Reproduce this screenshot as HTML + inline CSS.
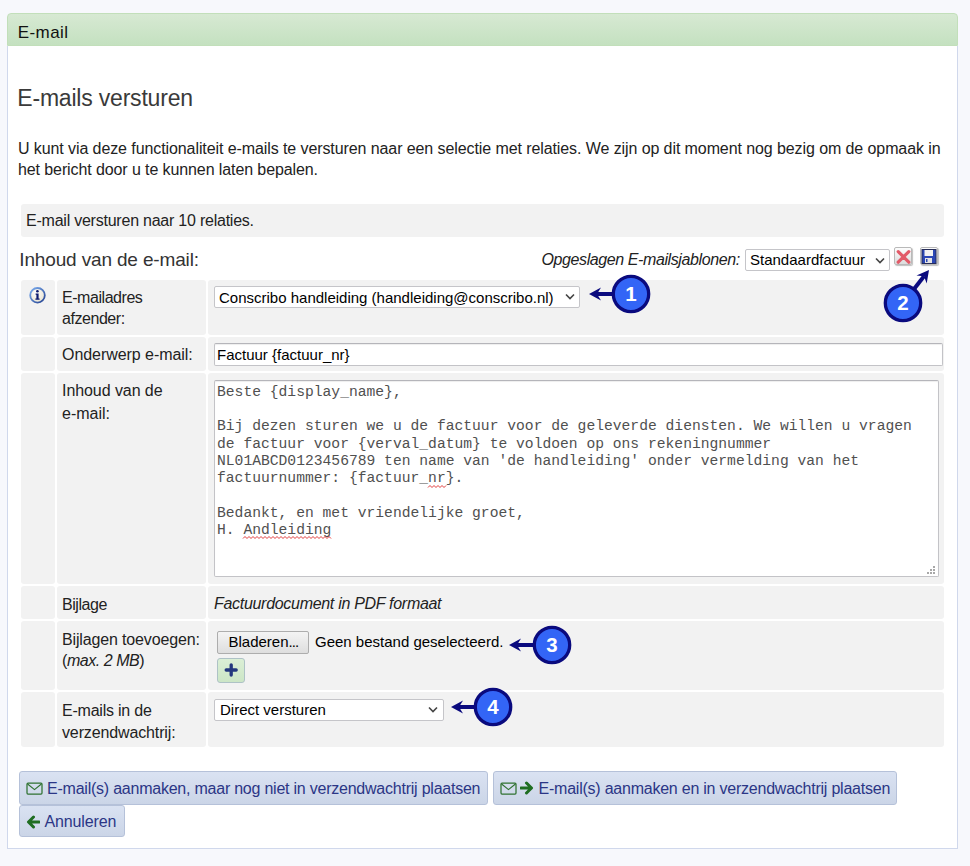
<!DOCTYPE html>
<html><head><meta charset="utf-8"><title>E-mail</title>
<style>html,body{margin:0;padding:0;}body{width:970px;height:866px;overflow:hidden;position:relative;background:#f7f8fc;font-family:'Liberation Sans', sans-serif;}</style>
</head><body>
<div style="position:absolute;left:7px;top:13px;width:951px;height:33px;box-sizing:border-box;background:linear-gradient(#d7e9d3,#c4e1c0);border:1px solid #c2dfba;border-radius:4px 4px 0 0;"></div>
<div style="position:absolute;left:7px;top:46px;width:951px;height:803px;box-sizing:border-box;background:#fff;border:1px solid #d0d8ec;border-top:0;"></div>
<div style="position:absolute;left:17.80px;top:21.51px;line-height:22px;font-size:17px;font-family:'Liberation Sans', sans-serif;color:#111;letter-spacing:0.4px;white-space:pre;">E-mail</div>
<div style="position:absolute;left:17.30px;top:83.43px;line-height:30px;font-size:23px;font-family:'Liberation Sans', sans-serif;color:#3a3a3a;letter-spacing:-0.2px;white-space:pre;">E-mails versturen</div>
<div style="position:absolute;left:18.00px;top:137.75px;line-height:21px;font-size:16px;font-family:'Liberation Sans', sans-serif;color:#222;letter-spacing:-0.09px;white-space:pre;">U kunt via deze functionaliteit e-mails te versturen naar een selectie met relaties. We zijn op dit moment nog bezig om de opmaak in</div>
<div style="position:absolute;left:18.00px;top:159.25px;line-height:21px;font-size:16px;font-family:'Liberation Sans', sans-serif;color:#222;letter-spacing:-0.1px;white-space:pre;">het bericht door u te kunnen laten bepalen.</div>
<div style="position:absolute;left:21px;top:204px;width:923px;height:33px;box-sizing:border-box;background:#f2f2f2;border-radius:3px;"></div>
<div style="position:absolute;left:26.00px;top:210.35px;line-height:21px;font-size:16px;font-family:'Liberation Sans', sans-serif;color:#222;letter-spacing:-0.23px;white-space:pre;">E-mail versturen naar 10 relaties.</div>
<div style="position:absolute;left:19.30px;top:246.71px;line-height:25px;font-size:19px;font-family:'Liberation Sans', sans-serif;color:#333;letter-spacing:-0.15px;white-space:pre;">Inhoud van de e-mail:</div>
<div style="position:absolute;left:541.50px;top:249.15px;line-height:21px;font-size:16px;font-family:'Liberation Sans', sans-serif;color:#222;letter-spacing:-0.4px;white-space:pre;font-style:italic;">Opgeslagen E-mailsjablonen:</div>
<div style="position:absolute;left:745px;top:249px;width:145px;height:22px;box-sizing:border-box;background:#fff;border:1px solid #c5c5c9;border-radius:2px;"></div>
<div style="position:absolute;left:750.00px;top:250.40px;line-height:20px;font-size:15px;font-family:'Liberation Sans', sans-serif;color:#000;letter-spacing:0px;white-space:pre;">Standaardfactuur</div>
<svg style="position:absolute;left:875px;top:257px" width="10" height="8" viewBox="0 0 10 8"><path d="M1 1.5 L5 5.5 L9 1.5" fill="none" stroke="#444" stroke-width="1.6"/></svg>
<div style="position:absolute;left:894px;top:247px;width:18px;height:18px;box-sizing:border-box;border:1px solid #b9b9b9;border-radius:2px;background:linear-gradient(#fdfdfd,#dcdcdc);box-shadow:1px 1px 1px rgba(0,0,0,0.25);"><svg width="16" height="16" viewBox="0 0 16 16" style="position:absolute;left:0;top:0"><path d="M3.2 3.6 L13.8 14.2 M13.8 3.6 L3.2 14.2" stroke="#e25a68" stroke-width="3.2" stroke-linecap="round"/></svg></div>
<div style="position:absolute;left:920px;top:247px;width:18px;height:18px;box-sizing:border-box;border:1px solid #b9b9b9;border-radius:2px;background:linear-gradient(#fdfdfd,#dcdcdc);box-shadow:1px 1px 1px rgba(0,0,0,0.25);"><svg width="16" height="16" viewBox="0 0 16 16" style="position:absolute;left:0;top:0"><rect x="1" y="1.5" width="14" height="14" fill="#2b47b5" stroke="#262c58" stroke-width="1"/><rect x="3.5" y="2" width="8.5" height="6" fill="#f2f2f2"/><rect x="4" y="10" width="7" height="5" fill="#e4e4e4"/><rect x="5" y="11" width="1.5" height="3" fill="#2b47b5"/></svg></div>
<div style="position:absolute;left:21px;top:280px;width:34px;height:55px;box-sizing:border-box;background:#f2f2f2;border-radius:3px;"></div>
<div style="position:absolute;left:57px;top:280px;width:149px;height:55px;box-sizing:border-box;background:#f2f2f2;border-radius:3px;"></div>
<div style="position:absolute;left:208px;top:280px;width:736px;height:55px;box-sizing:border-box;background:#f2f2f2;border-radius:3px;"></div>
<div style="position:absolute;left:21px;top:337px;width:34px;height:34px;box-sizing:border-box;background:#f2f2f2;border-radius:3px;"></div>
<div style="position:absolute;left:57px;top:337px;width:149px;height:34px;box-sizing:border-box;background:#f2f2f2;border-radius:3px;"></div>
<div style="position:absolute;left:208px;top:337px;width:736px;height:34px;box-sizing:border-box;background:#f2f2f2;border-radius:3px;"></div>
<div style="position:absolute;left:21px;top:373px;width:34px;height:211px;box-sizing:border-box;background:#f2f2f2;border-radius:3px;"></div>
<div style="position:absolute;left:57px;top:373px;width:149px;height:211px;box-sizing:border-box;background:#f2f2f2;border-radius:3px;"></div>
<div style="position:absolute;left:208px;top:373px;width:736px;height:211px;box-sizing:border-box;background:#f2f2f2;border-radius:3px;"></div>
<div style="position:absolute;left:21px;top:586px;width:34px;height:33px;box-sizing:border-box;background:#f2f2f2;border-radius:3px;"></div>
<div style="position:absolute;left:57px;top:586px;width:149px;height:33px;box-sizing:border-box;background:#f2f2f2;border-radius:3px;"></div>
<div style="position:absolute;left:208px;top:586px;width:736px;height:33px;box-sizing:border-box;background:#f2f2f2;border-radius:3px;"></div>
<div style="position:absolute;left:21px;top:621px;width:34px;height:69px;box-sizing:border-box;background:#f2f2f2;border-radius:3px;"></div>
<div style="position:absolute;left:57px;top:621px;width:149px;height:69px;box-sizing:border-box;background:#f2f2f2;border-radius:3px;"></div>
<div style="position:absolute;left:208px;top:621px;width:736px;height:69px;box-sizing:border-box;background:#f2f2f2;border-radius:3px;"></div>
<div style="position:absolute;left:21px;top:692px;width:34px;height:55px;box-sizing:border-box;background:#f2f2f2;border-radius:3px;"></div>
<div style="position:absolute;left:57px;top:692px;width:149px;height:55px;box-sizing:border-box;background:#f2f2f2;border-radius:3px;"></div>
<div style="position:absolute;left:208px;top:692px;width:736px;height:55px;box-sizing:border-box;background:#f2f2f2;border-radius:3px;"></div>
<svg style="position:absolute;left:29px;top:287px" width="17" height="17" viewBox="0 0 17 17"><defs><linearGradient id="ig" x1="0" y1="0" x2="1" y2="1"><stop offset="0" stop-color="#7fb0f0"/><stop offset="1" stop-color="#23408f"/></linearGradient><radialGradient id="ifl" cx="0.4" cy="0.35" r="0.7"><stop offset="0" stop-color="#ffffff"/><stop offset="1" stop-color="#e8e2cf"/></radialGradient></defs><circle cx="8.5" cy="8.3" r="7.3" fill="url(#ifl)" stroke="url(#ig)" stroke-width="1.8"/><circle cx="8.4" cy="4.2" r="1.3" fill="#0d1a6e"/><path d="M6.6 6.6 H9.6 V11.6 H10.6 V12.8 H6.4 V11.6 H7.4 V7.8 H6.6 Z" fill="#0d1a6e"/></svg>
<div style="position:absolute;left:62.00px;top:286.85px;line-height:21px;font-size:16px;font-family:'Liberation Sans', sans-serif;color:#222;letter-spacing:-0.45px;white-space:pre;">E-mailadres</div>
<div style="position:absolute;left:62.00px;top:308.45px;line-height:21px;font-size:16px;font-family:'Liberation Sans', sans-serif;color:#222;letter-spacing:-0.45px;white-space:pre;">afzender:</div>
<div style="position:absolute;left:62.00px;top:344.35px;line-height:21px;font-size:16px;font-family:'Liberation Sans', sans-serif;color:#222;letter-spacing:-0.05px;white-space:pre;">Onderwerp e-mail:</div>
<div style="position:absolute;left:62.00px;top:380.45px;line-height:21px;font-size:16px;font-family:'Liberation Sans', sans-serif;color:#222;letter-spacing:-0.07px;white-space:pre;">Inhoud van de</div>
<div style="position:absolute;left:62.00px;top:402.85px;line-height:21px;font-size:16px;font-family:'Liberation Sans', sans-serif;color:#222;letter-spacing:0px;white-space:pre;">e-mail:</div>
<div style="position:absolute;left:62.00px;top:593.85px;line-height:21px;font-size:16px;font-family:'Liberation Sans', sans-serif;color:#222;letter-spacing:-0.45px;white-space:pre;">Bijlage</div>
<div style="position:absolute;left:62.00px;top:628.95px;line-height:21px;font-size:16px;font-family:'Liberation Sans', sans-serif;color:#222;letter-spacing:-0.15px;white-space:pre;">Bijlagen toevoegen:</div>
<div style="position:absolute;left:62.00px;top:649.55px;line-height:21px;font-size:16px;font-family:'Liberation Sans', sans-serif;color:#222;letter-spacing:-0.45px;white-space:pre;">(<i>max. 2 MB</i>)</div>
<div style="position:absolute;left:62.00px;top:699.85px;line-height:21px;font-size:16px;font-family:'Liberation Sans', sans-serif;color:#222;letter-spacing:-0.22px;white-space:pre;">E-mails in de</div>
<div style="position:absolute;left:62.00px;top:721.55px;line-height:21px;font-size:16px;font-family:'Liberation Sans', sans-serif;color:#222;letter-spacing:-0.13px;white-space:pre;">verzendwachtrij:</div>
<div style="position:absolute;left:214px;top:286px;width:366px;height:22px;box-sizing:border-box;background:#fff;border:1px solid #c5c5c9;border-radius:2px;"></div>
<div style="position:absolute;left:219.00px;top:287.70px;line-height:20px;font-size:15px;font-family:'Liberation Sans', sans-serif;color:#000;letter-spacing:0px;white-space:pre;">Conscribo handleiding (handleiding@conscribo.nl)</div>
<svg style="position:absolute;left:565px;top:293px" width="10" height="8" viewBox="0 0 10 8"><path d="M1 1.5 L5 5.5 L9 1.5" fill="none" stroke="#444" stroke-width="1.6"/></svg>
<div style="position:absolute;left:214px;top:343px;width:729px;height:23px;box-sizing:border-box;background:#fff;border:1px solid #c3c3c7;border-top-color:#b5b5ba;border-radius:2px;box-shadow:inset 0 1px 1px rgba(0,0,0,0.07);"></div>
<div style="position:absolute;left:217.00px;top:345.00px;line-height:20px;font-size:15px;font-family:'Liberation Sans', sans-serif;color:#000;letter-spacing:0px;white-space:pre;">Factuur {factuur_nr}</div>
<div style="position:absolute;left:214px;top:380px;width:725px;height:197px;box-sizing:border-box;background:#fff;border:1px solid #c3c3c7;border-top-color:#b5b5ba;border-radius:2px;box-shadow:inset 0 1px 1px rgba(0,0,0,0.07);"></div>
<div style="position:absolute;left:217.00px;top:383.80px;line-height:17px;font-size:14.67px;font-family:'Liberation Mono', monospace;color:#505050;letter-spacing:0px;white-space:pre;">Beste {display_name},</div>
<div style="position:absolute;left:217.00px;top:418.40px;line-height:17px;font-size:14.67px;font-family:'Liberation Mono', monospace;color:#505050;letter-spacing:0px;white-space:pre;">Bij dezen sturen we u de factuur voor de geleverde diensten. We willen u vragen</div>
<div style="position:absolute;left:217.00px;top:435.70px;line-height:17px;font-size:14.67px;font-family:'Liberation Mono', monospace;color:#505050;letter-spacing:0px;white-space:pre;">de factuur voor {verval_datum} te voldoen op ons rekeningnummer</div>
<div style="position:absolute;left:217.00px;top:453.00px;line-height:17px;font-size:14.67px;font-family:'Liberation Mono', monospace;color:#505050;letter-spacing:0px;white-space:pre;">NL01ABCD0123456789 ten name van 'de handleiding' onder vermelding van het</div>
<div style="position:absolute;left:217.00px;top:470.30px;line-height:17px;font-size:14.67px;font-family:'Liberation Mono', monospace;color:#505050;letter-spacing:0px;white-space:pre;">factuurnummer: {factuur_nr}.</div>
<div style="position:absolute;left:217.00px;top:504.90px;line-height:17px;font-size:14.67px;font-family:'Liberation Mono', monospace;color:#505050;letter-spacing:0px;white-space:pre;">Bedankt, en met vriendelijke groet,</div>
<div style="position:absolute;left:217.00px;top:522.20px;line-height:17px;font-size:14.67px;font-family:'Liberation Mono', monospace;color:#505050;letter-spacing:0px;white-space:pre;">H. Andleiding</div>
<svg style="position:absolute;left:0;top:0;overflow:visible" width="1" height="1"><path d="M428 487.5 L430 485.5 L432 487.5 L434 485.5 L436 487.5 L438 485.5 L440 487.5 L442 485.5 L444 487.5 L446 485.5" fill="none" stroke="#e23b3b" stroke-width="1"/></svg>
<svg style="position:absolute;left:0;top:0;overflow:visible" width="1" height="1"><path d="M243 538.5 L245 536.5 L247 538.5 L249 536.5 L251 538.5 L253 536.5 L255 538.5 L257 536.5 L259 538.5 L261 536.5 L263 538.5 L265 536.5 L267 538.5 L269 536.5 L271 538.5 L273 536.5 L275 538.5 L277 536.5 L279 538.5 L281 536.5 L283 538.5 L285 536.5 L287 538.5 L289 536.5 L291 538.5 L293 536.5 L295 538.5 L297 536.5 L299 538.5 L301 536.5 L303 538.5 L305 536.5 L307 538.5 L309 536.5 L311 538.5 L313 536.5 L315 538.5 L317 536.5 L319 538.5 L321 536.5 L323 538.5 L325 536.5 L327 538.5 L329 536.5 L331 538.5" fill="none" stroke="#e23b3b" stroke-width="1"/></svg>
<svg style="position:absolute;left:926px;top:565px" width="10" height="10" viewBox="0 0 10 10" fill="#a8a8a8"><rect x="7" y="1" width="2" height="2"/><rect x="4" y="4" width="2" height="2"/><rect x="7" y="4" width="2" height="2"/><rect x="1" y="7" width="2" height="2"/><rect x="4" y="7" width="2" height="2"/><rect x="7" y="7" width="2" height="2"/></svg>
<div style="position:absolute;left:214.00px;top:593.25px;line-height:21px;font-size:16px;font-family:'Liberation Sans', sans-serif;color:#222;letter-spacing:-0.3px;white-space:pre;font-style:italic;">Factuurdocument in PDF formaat</div>
<div style="position:absolute;left:217px;top:631px;width:92px;height:23px;box-sizing:border-box;background:linear-gradient(#f4f4f4,#dedede);border:1px solid #adadad;border-radius:2px;"></div>
<div style="position:absolute;left:228.50px;top:632.10px;line-height:20px;font-size:15px;font-family:'Liberation Sans', sans-serif;color:#000;letter-spacing:0px;white-space:pre;">Bladeren<span style="letter-spacing:-0.9px">...</span></div>
<div style="position:absolute;left:315.00px;top:632.10px;line-height:20px;font-size:15px;font-family:'Liberation Sans', sans-serif;color:#000;letter-spacing:0px;white-space:pre;">Geen bestand geselecteerd.</div>
<div style="position:absolute;left:217px;top:658px;width:28px;height:25px;box-sizing:border-box;background:linear-gradient(#dbefd6,#cce6c6);border:1px solid #aec2c6;border-radius:3px;"></div>
<svg style="position:absolute;left:224px;top:663px" width="15" height="14" viewBox="0 0 15 14"><path d="M7.2 1.8 V12 M2.2 7 H12.2" stroke="#24387e" stroke-width="3.3" stroke-linecap="round"/></svg>
<div style="position:absolute;left:214px;top:699px;width:230px;height:22px;box-sizing:border-box;background:#fff;border:1px solid #c5c5c9;border-radius:2px;"></div>
<div style="position:absolute;left:220.00px;top:700.40px;line-height:20px;font-size:15px;font-family:'Liberation Sans', sans-serif;color:#000;letter-spacing:0px;white-space:pre;">Direct versturen</div>
<svg style="position:absolute;left:428px;top:706px" width="10" height="8" viewBox="0 0 10 8"><path d="M1 1.5 L5 5.5 L9 1.5" fill="none" stroke="#444" stroke-width="1.6"/></svg>
<div style="position:absolute;left:19px;top:771px;width:469px;height:34px;box-sizing:border-box;background:linear-gradient(#dae2f2,#cbd5e7);border:1px solid #b5c1d9;border-radius:3px;"></div>
<svg style="position:absolute;left:26px;top:782px" width="17" height="13" viewBox="0 0 17 13"><rect x="1" y="1.2" width="15" height="10.8" rx="1" fill="none" stroke="#2f7230" stroke-width="1.25"/><path d="M1.6 2 L8.5 7.6 L15.4 2" fill="none" stroke="#2f7230" stroke-width="1.2"/></svg>
<div style="position:absolute;left:47.00px;top:778.25px;line-height:21px;font-size:16px;font-family:'Liberation Sans', sans-serif;color:#2b3686;letter-spacing:-0.23px;white-space:pre;">E-mail(s) aanmaken, maar nog niet in verzendwachtrij plaatsen</div>
<div style="position:absolute;left:493px;top:771px;width:404px;height:34px;box-sizing:border-box;background:linear-gradient(#dae2f2,#cbd5e7);border:1px solid #b5c1d9;border-radius:3px;"></div>
<svg style="position:absolute;left:500px;top:782px" width="17" height="13" viewBox="0 0 17 13"><rect x="1" y="1.2" width="15" height="10.8" rx="1" fill="none" stroke="#2f7230" stroke-width="1.25"/><path d="M1.6 2 L8.5 7.6 L15.4 2" fill="none" stroke="#2f7230" stroke-width="1.2"/></svg>
<svg style="position:absolute;left:520px;top:781px" width="14" height="14" viewBox="0 0 14 14"><path d="M1 7 H11 M6.5 2 L11.5 7 L6.5 12" fill="none" stroke="#1f6e22" stroke-width="3" stroke-linecap="round" stroke-linejoin="round"/></svg>
<div style="position:absolute;left:538.50px;top:778.25px;line-height:21px;font-size:16px;font-family:'Liberation Sans', sans-serif;color:#2b3686;letter-spacing:-0.23px;white-space:pre;">E-mail(s) aanmaken en in verzendwachtrij plaatsen</div>
<div style="position:absolute;left:19px;top:805px;width:106px;height:32px;box-sizing:border-box;background:linear-gradient(#dae2f2,#cbd5e7);border:1px solid #b5c1d9;border-radius:3px;"></div>
<svg style="position:absolute;left:26px;top:815px" width="14" height="14" viewBox="0 0 14 14"><path d="M13 7 H3 M7.5 2 L2.5 7 L7.5 12" fill="none" stroke="#1f6e22" stroke-width="3" stroke-linecap="round" stroke-linejoin="round"/></svg>
<div style="position:absolute;left:44.50px;top:810.65px;line-height:21px;font-size:16px;font-family:'Liberation Sans', sans-serif;color:#2b3686;letter-spacing:-0.13px;white-space:pre;">Annuleren</div>
<svg style="position:absolute;left:0;top:0" width="970" height="866" viewBox="0 0 970 866">
<path d="M616.0 294.0 L597.0 294.0" stroke="#0a0a7e" stroke-width="4"/><path d="M589.0 294.0 L601.0 287.5 L597.0 294.0 L601.0 300.5 Z" fill="#0a0a7e"/>
<circle cx="631" cy="294" r="17.7" fill="#3365f6" stroke="#0a0a7e" stroke-width="3.3"/>
<text x="631" y="301.3" text-anchor="middle" font-family="Liberation Sans" font-weight="bold" font-size="20.5" fill="#fff">1</text>
<path d="M912.3 291.2 L924.0 276.3" stroke="#0a0a7e" stroke-width="4"/><path d="M929.0 270.0 L926.7 283.4 L924.0 276.3 L916.5 275.4 Z" fill="#0a0a7e"/>
<circle cx="903" cy="303" r="17.7" fill="#3365f6" stroke="#0a0a7e" stroke-width="3.3"/>
<text x="903" y="310.3" text-anchor="middle" font-family="Liberation Sans" font-weight="bold" font-size="20.5" fill="#fff">2</text>
<path d="M537.0 645.0 L517.0 645.0" stroke="#0a0a7e" stroke-width="4"/><path d="M509.0 645.0 L521.0 638.5 L517.0 645.0 L521.0 651.5 Z" fill="#0a0a7e"/>
<circle cx="552" cy="645" r="17.7" fill="#3365f6" stroke="#0a0a7e" stroke-width="3.3"/>
<text x="552" y="652.3" text-anchor="middle" font-family="Liberation Sans" font-weight="bold" font-size="20.5" fill="#fff">3</text>
<path d="M478.0 707.0 L459.0 707.0" stroke="#0a0a7e" stroke-width="4"/><path d="M451.0 707.0 L463.0 700.5 L459.0 707.0 L463.0 713.5 Z" fill="#0a0a7e"/>
<circle cx="493" cy="707" r="17.7" fill="#3365f6" stroke="#0a0a7e" stroke-width="3.3"/>
<text x="493" y="714.3" text-anchor="middle" font-family="Liberation Sans" font-weight="bold" font-size="20.5" fill="#fff">4</text>
</svg>
</body></html>
